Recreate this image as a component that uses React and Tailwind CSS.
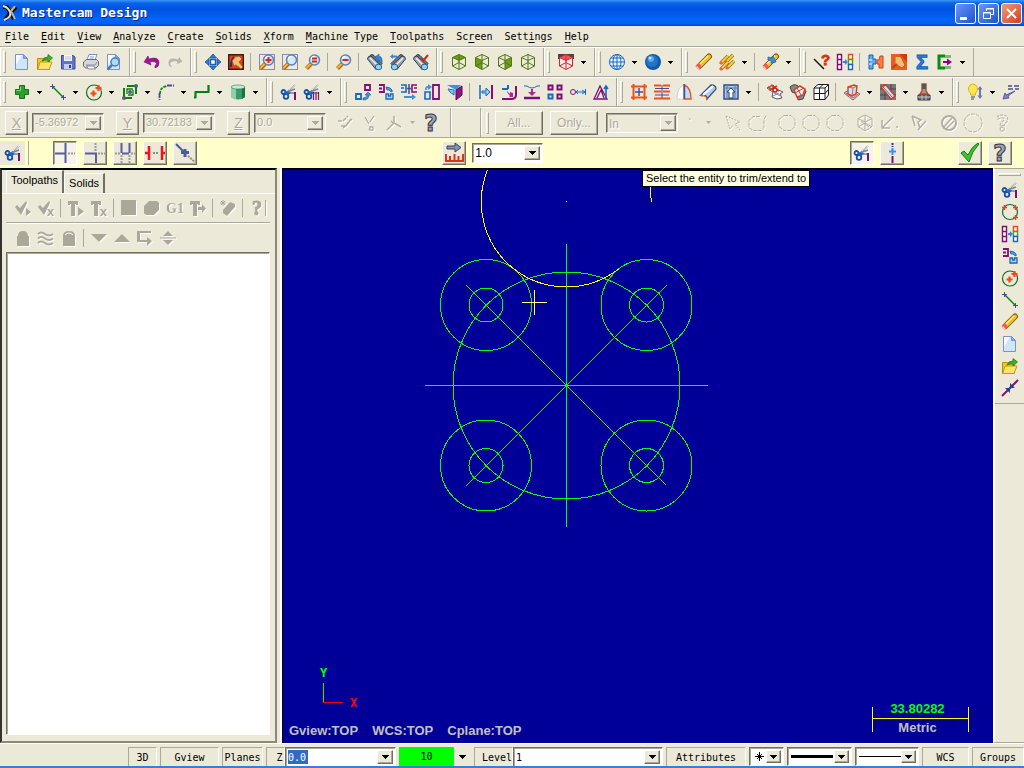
import React, { useState } from "react";

const MONO = "font-['DejaVu_Sans_Mono','Liberation_Mono',monospace]";
const SANS = "font-['Liberation_Sans',Arial,sans-serif]";

const raised =
  "border border-t-white border-l-white border-r-[#716f64] border-b-[#716f64] shadow-[inset_-1px_-1px_0_#aca899]";
const sunken =
  "border border-t-[#716f64] border-l-[#716f64] border-r-white border-b-white shadow-[inset_1px_1px_0_#aca899]";

/* ---------- shared icon parts ---------- */

const Page = () => (
  <>
    <path d="M1.500 .5h8l4 4v11h-12z" fill="#cfe5fc" stroke="#7c92c4" />
    <path d="M2 1h6L2 11z" fill="#f4faff" />
    <path d="M9.500 .5v4h4z" fill="#7fb0ea" stroke="#7c92c4" />
  </>
);

const Lens = () => (
  <>
    <path d="M1.500 14.500L6 10" stroke="#a86a10" strokeWidth="4" />
    <path d="M1.500 14L6 9.500" stroke="#ffb52c" strokeWidth="2" />
    <circle cx="9.500" cy="6" r="5" fill="#cfe9fd" stroke="#5f7fb5" strokeWidth="1.500" />
    <path d="M6.500 5a3 3 0 013-2.500" stroke="#fff" strokeWidth="1.500" />
  </>
);

const DotBox = () => (
  <rect x=".5" y=".5" width="15" height="15" stroke="#2a2a90" strokeDasharray="1 1" />
);

const Binocular = () => (
  <>
    <path d="M3 1.500q2-2 4 0l8 8-4 5z" fill="#6c7688" stroke="#343c4c" />
    <path d="M.5 5q0-3 3.500-3l9.500 9-4.500 4.500z" fill="#98a4b6" stroke="#343c4c" />
    <path d="M3 4l8 8" stroke="#eef2f8" strokeWidth="1.500" />
    <ellipse cx="11.500" cy="13" rx="3.200" ry="2.800" fill="#8fd3f6" stroke="#2c5f84" />
  </>
);

const Scissors = () => (
  <>
    <path d="M5 9l9-8M6 8l8-3M7 9h7" stroke="#7b8594" strokeWidth="1.500" />
    <path d="M8 6l6-5" stroke="#dfe5ee" />
    <circle cx="2.500" cy="8" r="2" stroke="#1550a8" strokeWidth="1.800" />
    <circle cx="5" cy="12.500" r="2.300" stroke="#1550a8" strokeWidth="1.800" />
    <path d="M4 8l4 1-2 2" stroke="#1d62c8" strokeWidth="2" />
  </>
);

const Cube = ({ face, fill = "#6f9c12", stroke = "#4f7812" }) => (
  <>
    {face && <path d={face} fill={fill} />}
    <path d="M8 .5l6.500 3v8.500L8 15.500 1.500 12V3.500zM1.500 3.500L8 6.500l6.500-3M8 6.500v9M8 .5v7M1.500 12L8 8.500l6.500 3.500" stroke={stroke} />
  </>
);

const Pencil = () => (
  <>
    <path d="M3.500 12L13 2.500" stroke="#7c5a08" strokeWidth="6" strokeLinecap="round" />
    <path d="M4 11.500l9-9" stroke="#f0c02c" strokeWidth="4" strokeLinecap="round" />
    <path d="M4 10l8-8" stroke="#ffe97c" strokeWidth="1.500" />
    <path d="M1 14l3.500-3" stroke="#f05a50" strokeWidth="5" />
    <path d="M.5 12.500l2.500 3" stroke="#ffc2bc" strokeWidth="1.500" />
  </>
);

const SlimPencil = ({ x, y }) => (
  <g transform={`translate(${x} ${y})`}>
    <path d="M1 9l7-7" stroke="#9a7208" strokeWidth="3.500" />
    <path d="M1 9l7-7" stroke="#f7cf3c" strokeWidth="2" />
    <path d="M0 10l2-2" stroke="#ee6058" strokeWidth="3" />
  </g>
);

const Columns = () => (
  <>
    <path d="M.5 .5h4v15h-4zM.5 5.500h4M.5 10.500h4" fill="#fff" stroke="#7c0f74" strokeWidth="1.400" />
    <path d="M6 7h2V5l3 3-3 3V9H6z" fill="#2d86dc" />
    <path d="M11.500 .5h4v5h-4z" fill="#fff" stroke="#ec4a17" strokeWidth="1.400" />
    <path d="M11.500 5.500h4v5h-4z" fill="#fff" stroke="#579a12" strokeWidth="1.400" />
    <path d="M11.500 10.500h4v5h-4z" fill="#fff" stroke="#1668c6" strokeWidth="1.400" />
  </>
);

const Rotate = () => (
  <>
    <path d="M1 1h5v7H1M1 4.500h3" stroke="#8a0a76" strokeWidth="1.800" />
    <path d="M8 3l4 1q3 2 2 4l-2-1q0-2-3-1z" fill="#55aaf0" stroke="#1a65b8" />
    <path d="M8 10h2.500v2h2v-2H15v5H8z" fill="#a8d8fa" stroke="#1a65b8" strokeWidth="1.300" />
  </>
);

const ghost = "#b2ae9f";

/* ---------- icons ---------- */

const icons = {
  new: <Page />,
  open: (
    <>
      <path d="M.5 4.500h5l1 1h6v10H.5z" fill="#f6c51e" stroke="#b98c0a" />
      <path d="M3 8h12l-3 7.500H.8z" fill="#ffe566" stroke="#c69a10" />
      <path d="M5 7q1-4 6-4V.5L15.500 4 11 8V6Q8 5.500 5 7z" fill="#47ab2c" stroke="#23781a" strokeWidth=".8" />
    </>
  ),
  save: (
    <>
      <path d="M1.500 1.500H13l2 1.500v12H1.500z" fill="#6373c8" stroke="#3c4a96" />
      <path d="M4 1h8v6H4z" fill="#f4f6fc" />
      <path d="M5 3h6M5 5h6" stroke="#b6bfda" />
      <path d="M4 10h8v5H4z" fill="#c5cdec" />
      <path d="M9 11h2v3H9z" fill="#343f86" />
    </>
  ),
  print: (
    <>
      <path d="M4 6l2-5.500h8L12 6z" fill="#fff" stroke="#7c92c4" />
      <path d="M7 3h4M6.500 5h4" stroke="#6aa5e8" />
      <path d="M.5 8l3-2.500h10l2 2v4L13 14H2.500l-2-2z" fill="#d4d6dc" stroke="#666a76" />
      <path d="M3 11h9l2-3" stroke="#8b8f9a" />
      <path d="M3.500 12h7l2 3h-7z" fill="#f4f6fa" stroke="#888c98" />
    </>
  ),
  preview: (
    <>
      <Page />
      <circle cx="9" cy="8" r="4" fill="#a8dcfa" stroke="#4a7cb4" strokeWidth="1.400" />
      <path d="M1.500 15.500L6 11" stroke="#4a7cb4" strokeWidth="2.500" />
    </>
  ),
  undo: <path d="M0 8l4-6 1 3q10-3 10 4 0 4-4 5v-2q3-3 0-4-3-1-5 0l1 3z" fill="#a3129a" stroke="#7a0c76" strokeWidth=".6" />,
  redo: <path d="M16 8l-4-6-1 3Q1 2 1 9q0 4 4 5v-2Q2 9 5 8q3-1 5 0l-1 3z" fill="#b9b6a8" stroke="#fff" strokeWidth=".5" />,
  fit: (
    <>
      <path d="M8 0l3.500 4h-7zM8 16l3.500-4h-7zM0 8l4-3.500v7zM16 8l-4-3.500v7z" fill="#2a7fd4" stroke="#0d4f9c" strokeWidth=".8" />
      <path d="M5.500 5.500h5v5h-5z" fill="#fff" stroke="#1660b4" strokeWidth="1.500" />
    </>
  ),
  repaint: (
    <>
      <path d="M.7 .7h14.600v14.600H.7z" fill="#e0401c" stroke="#4a1410" strokeWidth="1.400" />
      <path d="M3 13q0-7 3-10" stroke="#2c2c6c" strokeWidth="2" />
      <path d="M4 7l3-4 4-1 3 3-3 3 4 5-2 2-5-4-2 1z" fill="#f5bc74" stroke="#a85a20" />
    </>
  ),
  zoomWindow: (
    <>
      <DotBox />
      <Lens />
      <path d="M9.500 3v6M6.500 6h6" stroke="#e02414" strokeWidth="2" />
    </>
  ),
  zoomTarget: (
    <>
      <DotBox />
      <Lens />
    </>
  ),
  zoomEqual: (
    <>
      <Lens />
      <path d="M7 4.500h5M7 7.500h5" stroke="#e02414" strokeWidth="2" />
    </>
  ),
  zoomOut: (
    <>
      <Lens />
      <path d="M6.500 6h6" stroke="#e02414" strokeWidth="2" />
    </>
  ),
  viewRotate: (
    <>
      <Binocular />
      <path d="M8 3l4-3v2q4 1 3 7-1-3-3-3v2z" fill="#2d86dc" stroke="#1a5ca8" strokeWidth=".5" />
    </>
  ),
  viewPrev: (
    <>
      <g transform="translate(16 0) scale(-1 1)">
        <Binocular />
      </g>
      <path d="M0 2.500L3 0v1.500h4v2H3V5z" fill="#2d86dc" />
    </>
  ),
  viewSet: (
    <>
      <Binocular />
      <path d="M8 4l2 3 5-6" stroke="#c82c14" strokeWidth="2" />
    </>
  ),
  cubeTop: <Cube face="M8 .5l6.500 3L8 6.500 1.500 3.500z" />,
  cubeFront: <Cube face="M1.500 3.500L8 6.500v9L1.500 12z" />,
  cubeRight: <Cube face="M14.500 3.500L8 6.500v9l6.500-3.500z" />,
  cubeIso: <Cube />,
  cubeRed: (
    <>
      <path d="M0 0h16v5H0z" fill="#4a4648" />
      <path d="M1.500 4L8 1l6.500 3v8.500L8 15.500l-6.500-3z" fill="#ffe9e6" />
      <Cube face="M8 .5l6.500 3L8 6.500 1.500 3.500z" fill="#f05a62" stroke="#d0282c" />
    </>
  ),
  globe: (
    <>
      <circle cx="8" cy="8" r="7.500" fill="#e9f5ff" stroke="#1668c6" />
      <path d="M8 .5v15M.5 8h15M2 4h12M2 12h12" stroke="#1668c6" />
      <ellipse cx="8" cy="8" rx="4" ry="7.500" stroke="#1668c6" />
    </>
  ),
  sphere: (
    <>
      <circle cx="8" cy="8" r="8" fill="#1259a6" />
      <circle cx="7" cy="7" r="6" fill="#2274ca" />
      <circle cx="6" cy="5" r="3" fill="#5fa8ec" />
      <circle cx="5" cy="4" r="1.300" fill="#c9e6ff" />
    </>
  ),
  pencil: <Pencil />,
  pencils: (
    <>
      <SlimPencil x={1} y={0} />
      <SlimPencil x={6} y={-1} />
      <SlimPencil x={1} y={6} />
      <SlimPencil x={7} y={5} />
    </>
  ),
  unDelete: (
    <>
      <Pencil />
      <path d="M5 3l4 1 1-2 3 6-5 1 1-2-4-1z" fill="#3a92e4" stroke="#17599e" strokeWidth=".7" />
    </>
  ),
  analyze: (
    <>
      <path d="M0 5l10 10" stroke="#111" strokeWidth="1.400" />
      <text x="7" y="11" fontSize="15" fontWeight="bold" fill="#e02c14" stroke="#e02c14" strokeWidth=".8" fontFamily="Liberation Sans">?</text>
    </>
  ),
  columns: <Columns />,
  puzzle: (
    <>
      <path d="M1 1h4v4h3v5H5v5H1z" fill="#58aef0" stroke="#1660b0" />
      <path d="M1 6h3M1 10h3" stroke="#fff" />
      <path d="M15 2v12h-4v-4H9V6h2l1-4z" fill="#ff7c40" stroke="#cc4410" />
    </>
  ),
  orange: (
    <>
      <path d="M0 0h16v16H0z" fill="#f05a1c" />
      <path d="M8 0h8v8z" fill="#e03410" />
      <path d="M4 2l6 1 4 8-3 3-7-4z" fill="#f5bc74" stroke="#b8621c" />
      <path d="M1 14l5-4" stroke="#a84c14" strokeWidth="2" />
    </>
  ),
  sigma: (
    <text x="8" y="15" textAnchor="middle" fontSize="20" fontWeight="bold" fill="#2a86dc" stroke="#1460b8" fontFamily="Liberation Sans">Σ</text>
  ),
  brackets: (
    <>
      <path d="M8 2H2v12h6" stroke="#0b8a18" strokeWidth="3" />
      <path d="M9 1v3M11 1v3M13 1v3M9 12v3M11 12v3M13 12v3" stroke="#0b8a18" />
      <path d="M6 7h4V4.500L15 8l-5 3.500V9H6z" fill="#7c0f74" />
    </>
  ),
  plus: (
    <>
      <path d="M5.500 1.500h5v4h4v5h-4v4h-5v-4h-4v-5h4z" fill="#2ba02b" stroke="#17701a" />
      <path d="M6.500 2.500v4h-4" stroke="#83dc7c" />
    </>
  ),
  line: (
    <>
      <path d="M3 3l10 10" stroke="#0a8a14" strokeWidth="1.500" />
      <path d="M2.500 0v5M0 2.500h5M13.500 11v5M11 13.500h5" stroke="#4b4b92" />
    </>
  ),
  arc: (
    <>
      <circle cx="8" cy="8.500" r="7.500" stroke="#0d6e28" strokeWidth="1.200" />
      <path d="M7.500 6.500v6M4.500 9.500h6M12.500 1v6M9.500 4h6" stroke="#f04a14" strokeWidth="2.200" />
    </>
  ),
  rect: (
    <>
      <path d="M5 2h9v8M10 14H2V4" stroke="#0b7c18" strokeWidth="2" />
      <path d="M5 10V5h6M11 6v5H6" stroke="#0b7c18" strokeWidth="1.300" />
      <circle cx="8" cy="8" r="2" fill="#5a5a78" />
      <circle cx="2" cy="14" r="2" fill="#5a5a78" />
      <circle cx="14" cy="2" r="2" fill="#5a5a78" />
    </>
  ),
  fillet: (
    <>
      <path d="M2 10q0-7 7-8" stroke="#0a8a14" strokeWidth="1.800" strokeDasharray="3 1" />
      <path d="M9 1.500h7M1.500 9v7" stroke="#4b4b92" strokeWidth="1.800" strokeDasharray="5 1" />
    </>
  ),
  spline: <path d="M0 13.500h1.500V8h13V1" stroke="#0a7c14" strokeWidth="2.200" strokeLinejoin="round" />,
  cylinder: (
    <>
      <path d="M1 3h14v10q-7 5-14 0z" fill="#3b9a68" />
      <path d="M1 3h5v12q-3 0-5-2z" fill="#8fd0ac" />
      <path d="M12 3h3v10l-3 2z" fill="#1c6e44" />
      <ellipse cx="8" cy="3" rx="7" ry="2" fill="#c4ecd4" stroke="#2c7c50" strokeWidth=".6" />
    </>
  ),
  trim: (
    <>
      <Scissors />
      <path d="M14 8v8" stroke="#7c0f74" strokeWidth="2" />
    </>
  ),
  trimMany: (
    <>
      <Scissors />
      <path d="M9.500 8v8M12 8v8M14.500 8v8" stroke="#7c0f74" strokeWidth="1.200" />
    </>
  ),
  translate: (
    <>
      <path d="M10 1h5v5h-5z" stroke="#8a0a76" strokeWidth="1.800" />
      <path d="M1 10h5v5H1z" stroke="#1668c6" strokeWidth="1.800" />
      <path d="M8 14q4 0 4-3h-2l3-3 3 3h-2q0 5-6 5z" fill="#3a92e4" stroke="#17599e" strokeWidth=".6" />
    </>
  ),
  rotate: <Rotate />,
  mirror: (
    <>
      <path d="M0 1h5v7H0M0 4h3" stroke="#1668c6" strokeWidth="1.600" />
      <path d="M16 1h-5v7h5M16 4h-3" stroke="#8a0a76" strokeWidth="1.600" />
      <path d="M8 0v10M6 4.500h4" stroke="#4b4b92" strokeWidth="1.500" />
      <path d="M3 12h8v-2l4 3-4 3v-2H3z" fill="#3a92e4" />
    </>
  ),
  scale: (
    <>
      <path d="M9 1h6v14H9z" stroke="#8a0a76" strokeWidth="1.800" />
      <path d="M1 8h5v7H1z" stroke="#1668c6" strokeWidth="1.600" />
      <path d="M1 6q0-4 3-4V0l4 3-4 3V4Q2 4 3 6z" fill="#3a92e4" />
    </>
  ),
  project: (
    <>
      <path d="M0 1h14L9 6z" fill="#3a92e4" />
      <path d="M1 5l6 1v5L3 8z" fill="#8fcdf8" stroke="#1668c6" />
      <path d="M9 6l6-4v9l-6 5z" fill="#8a1a80" stroke="#5c0a56" />
    </>
  ),
  offset: (
    <>
      <path d="M2 1v14" stroke="#1668c6" strokeWidth="1.500" />
      <path d="M14 1v14" stroke="#8a0a76" strokeWidth="2" />
      <path d="M4 7h4V4l4 4-4 4V9H4z" fill="#8fcdf8" stroke="#1668c6" />
    </>
  ),
  offsetContour: (
    <>
      <path d="M1 5h6M7 1v4" stroke="#1668c6" strokeWidth="2" />
      <path d="M15 2v9q0 4-5 4H1" stroke="#8a0a76" strokeWidth="2" />
      <path d="M6 7l3 3V8l3 1v4H8l1-1-3-4z" fill="#b0268e" />
    </>
  ),
  projectDown: (
    <>
      <path d="M0 2h3q5 4 10 0h3" stroke="#1668c6" />
      <path d="M0 14h16" stroke="#7c0f74" strokeWidth="2.500" />
      <path d="M7 5h2v3h3l-4 4-4-4h3z" fill="#b0268e" />
    </>
  ),
  array: (
    <>
      <path d="M1.500 1.500h4v4h-4zM10.500 1.500h4v4h-4zM10.500 10.500h4v4h-4z" stroke="#7c0f74" strokeWidth="2" />
      <path d="M1.500 10.500h4v4h-4z" stroke="#1668c6" strokeWidth="2" />
    </>
  ),
  stretch: (
    <>
      <circle cx="3" cy="8" r="2.500" stroke="#7c0f74" />
      <path d="M6 8h9M8 6l-2 2 2 2M12 6l3 2-3 2M15.500 5v6" stroke="#1668c6" />
    </>
  ),
  warp: (
    <>
      <path d="M7 2L1 15h13zM4 14l4-8 3 8" stroke="#7c0f74" strokeWidth="1.300" />
      <path d="M13 14V3M11 5l2-3 2 3" stroke="#1668c6" strokeWidth="1.600" />
    </>
  ),
  fence: (
    <>
      <path d="M2.500 0v16M13.500 0v16M0 2.500h16M0 13.500h16" stroke="#f0501c" strokeWidth="2" />
      <path d="M8 4v8M4 8h8" stroke="#4b4b92" strokeWidth="1.500" />
    </>
  ),
  ruled: (
    <>
      <path d="M0 1.500h7M9 1.500h7M0 7.500h7M9 7.500h7M0 14.500h16" stroke="#f0501c" strokeWidth="2" />
      <path d="M1 4.500h14M1 11h14M8 1v13" stroke="#4b4b92" />
    </>
  ),
  revolve: (
    <>
      <path d="M0 15q0-12 7-14v14z" fill="#fff" stroke="#c8d4e4" />
      <path d="M7 1q7 2 7 14H7z" fill="#b4e2fb" stroke="#f0501c" strokeWidth="1.400" />
      <path d="M7.500 0v15" stroke="#4b4b92" strokeWidth="1.400" />
    </>
  ),
  sweep: (
    <>
      <path d="M1 11L11 1q5 0 5 4L7 15q0-5-6-4z" fill="#b4cef0" stroke="#3c5488" strokeWidth="1.300" />
      <path d="M3 11L13 2" stroke="#fff" strokeWidth="2" />
      <path d="M1 12q6-1 6 4" stroke="#e05a20" />
    </>
  ),
  drafted: (
    <>
      <path d="M1 1h14v14H1z" fill="#a9c8ea" stroke="#30487c" strokeWidth="1.400" />
      <path d="M1 4h14M4 1v14M12 1v14" stroke="#5a7cb0" />
      <path d="M8 4l4 4h-2v6H6V8H4z" fill="#fff" stroke="#2c3c6c" />
    </>
  ),
  net: (
    <>
      <path d="M0 4l6-3 3 4 7 3-3 2 2 4-5 1-5-2 1-5z" fill="#fff" stroke="#55586c" />
      <path d="M1 3l9 5M4 1l8 6M2 6l8-4" stroke="#e03a1c" strokeWidth="1.600" />
      <path d="M7 9l7 3M6 12l6-3" stroke="#7c8090" />
      <circle cx="8" cy="6" r="2" fill="#fff" stroke="#c01c1c" strokeWidth="1.300" />
    </>
  ),
  netFill: (
    <>
      <path d="M0 3q4-4 8-1l2 2 6 3-3 8-5 1-1-6-5-2z" fill="#85888f" stroke="#44464e" />
      <path d="M4 6l6-4 5 3-2 6-6 2z" fill="#e4eff8" stroke="#e03a1c" strokeWidth="1.500" />
      <path d="M5 9l9-5M7 4l4 7" stroke="#e03a1c" />
    </>
  ),
  wireCube: <path d="M1 4l4-3.500h10.500V11L12 15.500H1zM1 4h11v11.500M12 4l3.500-3.500M6.500 4v11.500M1 9.500h11l3.500-4M6.500 4L10 .5" fill="#fff" stroke="#1a1a24" />,
  trimSurf: (
    <>
      <path d="M0 9l5-3 6 1 5 3-7 6z" fill="#d2d8e0" stroke="#666c7a" />
      <path d="M4 3l6-2 3 1-1 8-4 2-4-2z" fill="#bfe6fb" stroke="#e03a1c" strokeWidth="1.400" />
      <path d="M4 3l5 1 4-2M9 4l-1 8M2 9l7 5 5-4" stroke="#e03a1c" strokeWidth=".8" />
    </>
  ),
  fillSurf: (
    <>
      <path d="M0 0h16v16H0z" fill="#76787e" />
      <path d="M0 5h16M0 11h16M5 0v16M11 0v16" stroke="#44464c" />
      <path d="M1 3l5-2 9 11-4 3z" fill="#bfe6fb" stroke="#e03a1c" strokeWidth="1.400" />
      <path d="M3 3l9 10" stroke="#5c7cb0" />
    </>
  ),
  blend: (
    <>
      <path d="M6 0h4v7l2 3H4l2-3z" fill="#9a9ca4" stroke="#e03a1c" strokeWidth="1.400" />
      <path d="M6 0h4v5H6z" fill="#55575f" />
      <path d="M2 11h12v5H2z" fill="#6a6c74" stroke="#33353c" />
      <path d="M2 13h12M6 11v5M10 11v5" stroke="#c0c2c8" />
    </>
  ),
  bulb: (
    <>
      <path d="M5.500 0a5 5 0 013 9v2h-5V9a5 5 0 012-9z" fill="#ffe64c" stroke="#cfa818" strokeWidth=".8" />
      <path d="M4 13h4M4 15h3" stroke="#7c7c84" strokeWidth="1.500" />
      <path d="M13 2l2.500 3.500H14v6h1.500L13 15l-2.500-3.500H12v-6h-1.500z" fill="#6c78b4" />
    </>
  ),
  level: (
    <>
      <path d="M5 2h4M11 2h5M5 5h5M12 5h4" stroke="#4b4b92" strokeWidth="1.400" />
      <path d="M12 7l-7 5 1 2-6 1 2-6 1 2z" fill="#7c86c0" stroke="#4b4b92" strokeWidth=".8" />
    </>
  ),
  circle3: (
    <>
      <circle cx="8" cy="8" r="7.500" stroke="#0d6e48" strokeWidth="1.200" />
      <path d="M2.500 1v5M0 3.500h5M13.500 1v5M11 3.500h5M13.500 11v5M11 13.500h5" stroke="#f0401c" strokeWidth="1.400" />
    </>
  ),
  breakTwo: (
    <>
      <path d="M0 16L16 0" stroke="#8a0a76" strokeWidth="2" />
      <path d="M3 8h5v5zM8 3v5h5z" fill="#17419c" />
    </>
  ),
  trim1: (
    <>
      <path d="M10.500 0v20M0 10.500h10" stroke="#5c5c9c" strokeWidth="2" />
      <path d="M13 10.500h7" stroke="#9c9c90" strokeWidth="2" strokeDasharray="2 1" />
    </>
  ),
  trim2: (
    <>
      <path d="M0 10.500h11V20" stroke="#5c5c9c" strokeWidth="2" />
      <path d="M10.500 0v9M13 10.500h7" stroke="#9c9c90" strokeWidth="2" strokeDasharray="2 1" />
    </>
  ),
  trim3: (
    <>
      <path d="M6.500 0v10M14.500 0v10M7 10.500h7" stroke="#5c5c9c" strokeWidth="2" />
      <path d="M0 10.500h6M16 10.500h4M6.500 12v8M14.500 12v8" stroke="#9c9c90" strokeWidth="2" strokeDasharray="2 1" />
    </>
  ),
  divide: (
    <>
      <path d="M4 3v14M17 3v14M0 10h5M16 10h4" stroke="#f01414" strokeWidth="2.500" />
      <path d="M8 10h6" stroke="#8c8c84" strokeWidth="2" strokeDasharray="2 1" />
    </>
  ),
  toPoint: (
    <>
      <path d="M1 1l8 8" stroke="#4b5c94" strokeWidth="2" />
      <path d="M10 6v8M6 9.500h8" stroke="#4b5c94" strokeWidth="3" />
      <path d="M13 13l7 6" stroke="#8c8c84" strokeWidth="2" strokeDasharray="2 1" />
    </>
  ),
  length: (
    <>
      <path d="M3 3h8V0l6 4.500L11 9V6H3z" fill="#8494ac" stroke="#3c4450" />
      <path d="M2 11v7h17v-7M6 13v5M10.500 11v7M14.500 13v5" stroke="#e03410" strokeWidth="2" />
    </>
  ),
  breakMode: (
    <>
      <path d="M10.500 0v4" stroke="#17419c" strokeWidth="2" strokeDasharray="2 1" />
      <path d="M10.500 5v7M7 8.500h7" stroke="#3a92e4" strokeWidth="2" />
      <path d="M10.500 13v7" stroke="#7c0f74" strokeWidth="2" />
    </>
  ),
  ok: <path d="M1 10l3-2 4 4Q12 3 18 0l1 1Q12 8 9 19z" fill="#3fc42e" stroke="#177a12" />,
  help: (
    <text x="8" y="16" textAnchor="middle" fontSize="23" fontWeight="bold" fill="#9ea3b6" stroke="#30323c" fontFamily="DejaVu Sans">?</text>
  ),
};

// greyed-out icons
const dim = {
  check: (
    <>
      <path d="M0 7l2-2 3 3 6-7 1 2-6 12z" />
      <path d="M11 8l5 4-5 4z" />
    </>
  ),
  checkX: (
    <>
      <path d="M0 7l2-2 3 3 6-7 1 2-6 12z" />
      <path d="M9 9h2l1.500 2L14 9h2l-2.500 3.500L16 16h-2l-1.500-2L11 16H9l2.500-3.500z" />
    </>
  ),
  tRun: (
    <>
      <path d="M0 1h10v4H8V4H7v12H3V4H2v1H0z" />
      <path d="M10 7l6 4.500-6 4.500z" />
    </>
  ),
  tX: (
    <>
      <path d="M0 1h10v4H8V4H7v12H3V4H2v1H0z" />
      <path d="M9 9h2l1.500 2L14 9h2l-2.500 3.500L16 16h-2l-1.500-2L11 16H9l2.500-3.500z" />
    </>
  ),
  square: <path d="M0 0h15v15H0z" />,
  solid: <path d="M5 1h8l2 2v7l-5 5H2l-2-2V6z" />,
  g1: (
    <text x="8" y="13" textAnchor="middle" fontSize="14" fontWeight="bold" fontFamily="Liberation Serif">
      G1
    </text>
  ),
  tNext: (
    <>
      <path d="M0 1h10v4H8V4H7v12H3V4H2v1H0z" />
      <path d="M8 7h4V4l4 4.500-4 4.500v-3H8z" />
    </>
  ),
  feed: (
    <>
      <path d="M3 10l7-8 5 2v3l-8 9-4-3z" />
      <path d="M3 0v6M0 3h6M1 1l4 4M5 1L1 5" stroke="#aca899" />
    </>
  ),
  question: (
    <>
      <text x="7" y="15" textAnchor="middle" fontSize="20" fontWeight="bold" stroke="#aca899" fontFamily="Liberation Serif">
        ?
      </text>
      <path d="M15 0h1v16h-1z" />
    </>
  ),
  lock: <path d="M3 6q0-5 5-5t5 5h1v10H2V6z" />,
  waves: <path d="M0 4q3-3 7 0t8 0M0 8.500q3-3 7 0t8 0M0 13q3-3 7 0t8 0" fill="none" stroke="#aca899" strokeWidth="2" />,
  ghostLock: (
    <>
      <path d="M2 6q0-5 6-5t6 5v10H2z" />
      <path d="M4 5q4-4 8 0" fill="none" stroke="#fff" />
    </>
  ),
  down: <path d="M0 4h16l-8 8z" />,
  up: <path d="M0 12h16L8 4z" />,
  into: <path d="M0 1h14v2H3v7h7V7l5 4-5 5v-4H0z" />,
  scroll: <path d="M3 6l5-5 5 5zM3 10l5 5 5-5zM0 7.500h16v1H0z" />,
};

// empty outlines used while no selection is active
const faint = {
  dot: <path d="M7 4h2" stroke={ghost} />,
  fast: <path d="M0 6h5l5-5M3 11h5l5-7M9 9l5-5M5 13l4-3" stroke={ghost} strokeWidth="1.500" strokeDasharray="4 1" />,
  mid: <path d="M3 2l4 7M12 1L8 7M8 11v2q-2 2 1 2h2v-3H8" stroke={ghost} strokeWidth="1.300" />,
  along: <path d="M8 1v7L1 15M8 8l7 4M5 6l3 3" stroke={ghost} strokeWidth="1.500" />,
  lasso: <path d="M1 1l14 6-5 2 5 6M1 1l4 13 3-4" stroke={ghost} strokeDasharray="2 1" />,
  poly: <path d="M11 1.500H4l-4 4v7l4 3h8l3-3v-8l2-4" stroke={ghost} strokeDasharray="4 1" />,
  hex: <path d="M5 .5h7l4 4v7l-4 4H5l-5-4v-7z" stroke={ghost} strokeDasharray="4 1" />,
  cube: <path d="M8 0l7 3.500v8L8 16l-7-4.500v-8zM1 3.500L8 7l7-3.500M8 1v14M1 12l7-4 7 4M4 6l8 6" stroke={ghost} />,
  pick: <path d="M12 2L2 12M1 5v8h8M15 12h2" stroke={ghost} strokeWidth="1.500" />,
  cursor: <path d="M1 1l9 4-3 2 2 6M1 1l3 10M15 6l-8 9" stroke={ghost} strokeWidth="1.500" />,
  no: (
    <>
      <circle cx="8" cy="8" r="7" stroke={ghost} strokeWidth="2" />
      <path d="M3 12L11 3M5 14l8-8" stroke={ghost} strokeWidth="1.500" />
    </>
  ),
  ring: <circle cx="8" cy="8" r="9" stroke={ghost} strokeDasharray="4 1" />,
  quest: (
    <text x="8" y="16" textAnchor="middle" fontSize="22" fontWeight="bold" stroke={ghost} strokeDasharray="3 1" fontFamily="DejaVu Sans">
      ?
    </text>
  ),
};

/* ---------- toolbar pieces ---------- */

function Icon({ name }) {
  return (
    <svg className="h-4 w-4 overflow-visible" viewBox="0 0 16 16" fill="none">
      {icons[name]}
    </svg>
  );
}

function Tri({ className = "fill-black" }) {
  return (
    <svg className={className} width="7" height="4" viewBox="0 0 7 4" shapeRendering="crispEdges">
      <path d="M0 0h7L3.500 4z" />
    </svg>
  );
}

function Tool({ name }) {
  if (name === "|") return <div className="mr-1 ml-[3px] h-[18px] w-px bg-[#aca899]" />;
  if (name === "v") {
    return (
      <button aria-label="more" className="flex h-6 w-[13px] items-center justify-center">
        <svg width="5" height="3" viewBox="0 0 5 3" shapeRendering="crispEdges">
          <path d="M0 0h5L2.500 3z" />
        </svg>
      </button>
    );
  }
  return (
    <button aria-label={name} className="flex h-6 w-[23px] items-center justify-center">
      <Icon name={name} />
    </button>
  );
}

function Grip() {
  return <div className="h-[22px] w-[3px] border border-t-white border-l-white border-r-[#aca899] border-b-[#aca899]" />;
}

function Band({ tools }) {
  return (
    <div className="flex h-full shrink-0 items-center border-r border-l border-r-[#aca899] border-l-white pr-1 pl-[2px]">
      <div className="mr-1">
        <Grip />
      </div>
      {tools.split(" ").map((n, i) => (
        <Tool key={i} name={n} />
      ))}
    </div>
  );
}

function ToolRow({ children }) {
  return (
    <div className="flex h-[30px] items-center overflow-hidden border-t border-b border-t-white border-b-[#aca899]">
      {children}
    </div>
  );
}

function Combo({ label, value, disabled, className, size = "text-xs", selected }) {
  const [text, setText] = useState(value);
  return (
    <div className={`flex h-5 items-stretch p-[2px] ${sunken} ${disabled ? "bg-[#ece9d8]" : "bg-white"} ${className}`}>
      <input
        aria-label={label}
        value={text}
        disabled={disabled}
        size={1}
        onChange={(e) => setText(e.target.value)}
        className={`min-w-0 outline-none ${size} ${
          selected ? "w-[20px] flex-none bg-[#316ac5] text-white" : "flex-1"
        } ${disabled ? "text-[#aca899] [text-shadow:1px_1px_0_white]" : ""}`}
      />
      {selected && <div className="flex-1" />}
      <button
        aria-label={`${label} list`}
        disabled={disabled}
        className={`flex w-4 items-center justify-center bg-[#ece9d8] ${raised}`}
      >
        <Tri className={disabled ? "fill-[#aca899]" : "fill-black"} />
      </button>
    </div>
  );
}

function RibbonButton({ name, pressed }) {
  return (
    <button
      aria-label={name}
      className={`flex h-6 w-6 items-center justify-center ${
        pressed ? `bg-[#f5f3ea] ${sunken}` : `bg-[#ece9d8] ${raised}`
      }`}
    >
      {["trim", "help"].includes(name) ? (
        <Icon name={name} />
      ) : (
        <svg className="h-5 w-5 overflow-visible" viewBox="0 0 20 20" fill="none">
          {icons[name]}
        </svg>
      )}
    </button>
  );
}

function Faint({ name }) {
  if (name === "|") return <div className="w-[6px]" />;
  if (name === "v") {
    return (
      <button aria-label="more" disabled className="flex w-[13px] justify-center">
        <svg width="5" height="3" viewBox="0 0 5 3" fill={ghost}>
          <path d="M0 0h5L2.500 3z" />
        </svg>
      </button>
    );
  }
  return (
    <button aria-label={name} disabled className="flex w-6 justify-center">
      <svg className="h-4 w-4 overflow-visible drop-shadow-[1px_1px_0_white]" viewBox="0 0 16 16" fill="none">
        {faint[name]}
      </svg>
    </button>
  );
}

function DimTool({ name }) {
  if (name === "|") return <div className="mr-[3px] ml-[3px] h-[18px] w-px bg-[#aca899]" />;
  return (
    <button aria-label={name} disabled className="flex w-[23px] justify-center">
      <svg
        className="h-4 w-4 overflow-visible drop-shadow-[1px_1px_0_white]"
        viewBox="0 0 16 16"
        fill="#aca899"
      >
        {dim[name]}
      </svg>
    </button>
  );
}

/* ---------- window ---------- */

function TitleBar() {
  return (
    <div className="flex h-[26px] items-center bg-[linear-gradient(to_bottom,#3c96fa_0%,#0a62ea_12%,#0052e0_35%,#0464fa_75%,#0460f4_90%,#0646c4_100%)] pr-[2px] pl-[2px]">
      <svg className="h-4 w-4" viewBox="0 0 16 16" fill="none">
        <path d="M1 2h4l7 12M14 2L9 7l-6 8" stroke="#111" strokeWidth="4" />
        <path d="M1 1q5 1 7 6t-6 8" stroke="#e4e0d4" strokeWidth="2" />
        <path d="M13 1L9 6l4 8" stroke="#b8b4a8" strokeWidth="2" />
        <path d="M9 6l4-4" stroke="#e0b040" strokeWidth="1.500" />
      </svg>
      <h1 className={`ml-1 flex-1 text-[13px] leading-4 font-bold text-white [text-shadow:1px_1px_0_#0a2a80] ${MONO}`}>
        Mastercam Design
      </h1>
      <div className="flex gap-[2px]">
        <button aria-label="Minimize" className="h-[21px] w-[21px] rounded-[3px] border border-white bg-gradient-to-br from-[#6a96f4] to-[#1c4fd4]">
          <svg viewBox="0 0 19 19">
            <path d="M4 13h7v3H4z" fill="#fff" />
          </svg>
        </button>
        <button aria-label="Restore" className="h-[21px] w-[21px] rounded-[3px] border border-white bg-gradient-to-br from-[#6a96f4] to-[#1c4fd4]">
          <svg viewBox="0 0 19 19" fill="none" stroke="#fff">
            <path d="M7.500 7V4.500h7v6H12M7 5h8M4.500 8.500h7v6h-7zM4 9h8" />
          </svg>
        </button>
        <button aria-label="Close" className="h-[21px] w-[21px] rounded-[3px] border border-white bg-gradient-to-br from-[#f0987c] to-[#d03c14]">
          <svg viewBox="0 0 19 19" stroke="#fff" strokeWidth="2">
            <path d="M5 5l9 9M14 5l-9 9" />
          </svg>
        </button>
      </div>
    </div>
  );
}

// [text, index of the underlined letter]
const menus = [
  ["File", 0],
  ["Edit", 0],
  ["View", 0],
  ["Analyze", 0],
  ["Create", 0],
  ["Solids", 0],
  ["Xform", 0],
  ["Machine Type", 0],
  ["Toolpaths", 0],
  ["Screen", 2],
  ["Settings", 4],
  ["Help", 0],
];

function MenuBar() {
  return (
    <nav className={`flex h-[21px] items-center gap-3 border-b border-[#aca899] pl-[5px] text-[10px] ${MONO}`}>
      {menus.map(([text, u]) => (
        <button key={text} className="whitespace-nowrap">
          {text.slice(0, u)}
          <u className="underline-offset-2">{text[u]}</u>
          {text.slice(u + 1)}
        </button>
      ))}
    </nav>
  );
}

function AxisField({ axis, value }) {
  return (
    <div className="mr-3 flex items-center gap-1">
      <button disabled className={`h-6 w-[23px] text-sm text-[#aca899] underline [text-shadow:1px_1px_0_white] ${raised}`}>
        {axis}
      </button>
      <Combo label={axis} value={value} disabled size="text-[11px]" className="w-[72px]" />
    </div>
  );
}

function CoordinateRow() {
  return (
    <div className="flex h-[31px] items-center overflow-hidden border-t border-b border-t-white border-b-[#aca899]">
      <div className="flex h-full shrink-0 items-center border-r border-[#aca899] pr-2 pl-[5px]">
        <AxisField axis="X" value="-5.36972" />
        <AxisField axis="Y" value="30.72183" />
        <AxisField axis="Z" value="0.0" />
        <div className="-ml-1 flex items-center">
          {["fast", "mid", "along", "v"].map((n) => (
            <Faint key={n} name={n} />
          ))}
          <Tool name="help" />
        </div>
      </div>
      <div className="h-full w-[30px] shrink-0 border-r border-l border-r-[#aca899] border-l-white" />
      <div className="flex shrink-0 items-center border-l border-white pl-1">
        <Grip />
        <button disabled className={`ml-[6px] h-6 w-12 text-xs text-[#aca899] [text-shadow:1px_1px_0_white] ${raised}`}>
          All...
        </button>
        <button disabled className={`ml-[7px] h-6 w-12 text-xs text-[#aca899] [text-shadow:1px_1px_0_white] ${raised}`}>
          Only...
        </button>
        <div className={`relative ml-2 h-5 w-[72px] p-[2px] ${sunken}`}>
          <select
            aria-label="Selection mode"
            disabled
            className="block h-full w-full appearance-none bg-[#ece9d8] text-xs leading-4 text-[#aca899] opacity-100 [text-shadow:1px_1px_0_white]"
          >
            <option>In</option>
          </select>
          <div className={`pointer-events-none absolute top-[1px] right-[1px] flex h-4 w-4 items-center justify-center bg-[#ece9d8] ${raised}`}>
            <Tri className="fill-[#aca899]" />
          </div>
        </div>
        {"dot v | lasso poly | hex hex hex | cube pick | cursor | no ring | quest".split(" ").map((n, i) => (
          <Faint key={i} name={n} />
        ))}
      </div>
    </div>
  );
}

function Ribbon() {
  return (
    <div className="flex h-[30px] items-center bg-[#ffffcc] pr-3">
      <div className="flex h-6 w-[25px] items-center justify-center bg-[#ece9d8]">
        <Icon name="trim" />
      </div>
      <div className="mr-6 ml-[3px] h-6 w-px bg-[#aca899]" />
      <div className="flex gap-[6px]">
        <RibbonButton name="trim1" pressed />
        <RibbonButton name="trim2" />
        <RibbonButton name="trim3" />
        <RibbonButton name="divide" />
        <RibbonButton name="toPoint" />
      </div>
      <div className="grow-[4]" />
      <RibbonButton name="length" />
      <Combo label="Length" value="1.0" className="ml-[6px] w-[71px]" />
      <div className="grow-[5]" />
      <div className="flex gap-[6px]">
        <RibbonButton name="trim" pressed />
        <RibbonButton name="breakMode" />
      </div>
      <div className="ml-[54px] flex gap-[6px]">
        <RibbonButton name="ok" />
        <RibbonButton name="help" />
      </div>
    </div>
  );
}

function OperationsPanel() {
  const [tab, setTab] = useState("Toolpaths");
  return (
    <aside className="flex w-[277px] shrink-0 flex-col border-t-2 border-r-2 border-b-2 border-l-2 border-t-black border-r-[#8c897c] border-b-[#8c897c] border-l-[#33322c]">
      <div className="flex h-[23px] items-end pl-1 text-[11px]" role="tablist">
        {["Toolpaths", "Solids"].map((t) => (
          <button
            key={t}
            role="tab"
            aria-selected={tab === t}
            onClick={() => setTab(t)}
            className={`border-t border-r-2 border-l border-t-white border-r-[#716f64] border-l-white px-1 ${
              tab === t ? "h-[23px] pb-1" : "h-5"
            }`}
          >
            {t}
          </button>
        ))}
      </div>
      <div className="flex flex-1 flex-col border-t border-white pr-[5px] pl-1">
        <div className="flex h-[29px] items-center border-b border-[#aca899] pl-[5px]">
          {"check checkX | tRun tX | square solid g1 tNext | feed | question".split(" ").map((n, i) => (
            <DimTool key={i} name={n} />
          ))}
        </div>
        <div className="flex h-[29px] items-center border-t border-white pl-[5px]">
          {"lock waves ghostLock | down up into scroll".split(" ").map((n, i) => (
            <DimTool key={i} name={n} />
          ))}
        </div>
        <div className={`mb-[6px] flex-1 bg-white ${sunken}`} />
      </div>
    </aside>
  );
}

const holes = [
  [486, 305],
  [646.5, 305],
  [486, 465.5],
  [646.5, 465.5],
];

function Drawing() {
  return (
    <svg className="absolute inset-0 h-full w-full" fill="none" shapeRendering="crispEdges">
      <g transform="translate(-283 -170)" stroke="#00ff00">
        <path d="M566.500 244v283M425 385.500h283" />
        <path d="M466 285l200 200M667 285L466 486" />
        <circle cx="566.500" cy="385.500" r="113.500" />
        {holes.map(([x, y]) => (
          <g key={`${x}-${y}`}>
            <circle cx={x} cy={y} r="45.500" />
            <circle cx={x} cy={y} r="17" />
          </g>
        ))}
        <g stroke="#ffff00">
          <path d="M487.500 170A85 85 0 00618.500 269" />
          <path d="M650.500 186v8l1 8M566 201.500h1" />
        </g>
        <path d="M522 302.500h25M534.500 290v25" stroke="#ffff80" />
      </g>
    </svg>
  );
}

function Viewport() {
  return (
    <main className="relative flex min-w-0 flex-1 flex-col justify-end border-t-2 border-l border-black bg-[#000099]">
      <Drawing />
      <div role="tooltip" className="absolute top-0 left-[359px] h-[17px] border border-black bg-[#ffffe1] px-[3px] text-[11px] leading-[15px] whitespace-nowrap">
        Select the entity to trim/extend to
      </div>
      <div className="flex items-end justify-between pr-6 pb-1 pl-[6px] text-[13px] leading-4 font-bold text-[#c0c0c0]">
        <div>
          <svg className="mb-[10px] ml-7 block" width="48" height="48" shapeRendering="crispEdges">
            <path d="M6.500 18v20" stroke="#00ff00" />
            <path d="M6 37.500h20" stroke="#ff0000" />
            <text x="3" y="12" fontSize="12" fontFamily="DejaVu Sans Mono" fill="#00ff00">
              Y
            </text>
            <text x="33" y="42" fontSize="12" fontFamily="DejaVu Sans Mono" fill="#ff0000">
              X
            </text>
          </svg>
          <div className="flex gap-[14px]">
            <span>Gview:TOP</span>
            <span>WCS:TOP</span>
            <span>Cplane:TOP</span>
          </div>
        </div>
        <div className="mb-[3px] w-[97px] text-center">
          <div className="pr-[6px] text-[#00ff00]">33.80282</div>
          <svg className="-mt-[10px] -mb-[12px] block w-full" height="25" viewBox="0 0 97 25" fill="none" stroke="#ffff00" shapeRendering="crispEdges">
            <path d="M.5 0v25M96.500 0v25M0 11.500h97" />
          </svg>
          <div className="pr-[6px]">Metric</div>
        </div>
      </div>
    </main>
  );
}

function SideBar() {
  return (
    <div className="w-[31px] shrink-0 border-t border-b border-l-2 border-t-[#aca899] border-b-[#aca899] border-l-white">
      <div className="flex flex-col items-center border-b border-[#aca899] pt-1 pb-1">
        <div className="mb-[3px] h-[3px] w-[23px] border border-t-white border-l-white border-r-[#aca899] border-b-[#aca899]" />
        {"trim circle3 columns rotate arc line pencil new open breakTwo".split(" ").map((n) => (
          <button key={n} aria-label={n} className="flex h-[22px] w-[23px] items-center justify-center">
            <Icon name={n} />
          </button>
        ))}
      </div>
    </div>
  );
}

const cell =
  "flex shrink-0 items-center justify-center border border-t-[#aca899] border-l-[#aca899] border-r-white border-b-0 whitespace-nowrap";

function StyleList({ label, className, children }) {
  return (
    <button aria-label={label} className={`flex shrink-0 items-stretch bg-white p-[2px] ${sunken} ${className}`}>
      <span className="flex flex-1 items-center justify-center self-center">{children}</span>
      <span className={`flex w-[15px] items-center justify-center bg-[#ece9d8] ${raised}`}>
        <Tri />
      </span>
    </button>
  );
}

function StatusBar() {
  return (
    <footer className={`flex h-[25px] items-stretch gap-[3px] overflow-hidden border-t border-b-2 border-t-white border-b-[#3a7edc] pt-[3px] text-[10px] ${MONO}`}>
      <div className="min-w-0 flex-1" />
      <button className={`${cell} w-[29px]`}>3D</button>
      <button className={`${cell} w-[59px]`}>Gview</button>
      <button className={`${cell} w-[41px]`}>Planes</button>
      <div className="flex shrink-0">
        <span className={`${cell} w-[19px] pl-2`}>Z</span>
        <Combo label="Z depth" value="0.0" size="text-[10px]" selected className="w-[111px]" />
      </div>
      <div className="flex shrink-0">
        <select aria-label="Color" className="w-[55px] appearance-none bg-[#00ff00] text-center">
          <option>10</option>
        </select>
        <button aria-label="Color list" className="flex w-[17px] items-center justify-center">
          <Tri />
        </button>
      </div>
      <div className="flex shrink-0">
        <span className={`${cell} w-[39px] justify-end overflow-hidden`}>Level</span>
        <Combo label="Level" value="1" size="text-[10px]" className="w-[150px]" />
      </div>
      <button className={`${cell} w-[80px]`}>Attributes</button>
      <StyleList label="Point style" className="w-[35px]">
        <svg width="11" height="11" stroke="#000" fill="none">
          <path d="M5.500 1v9M1 5.500h9M3 3l5 5M8 3L3 8" />
        </svg>
      </StyleList>
      <StyleList label="Line width" className="w-[65px]">
        <svg width="42" height="3">
          <path d="M0 0h42v3H0z" />
        </svg>
      </StyleList>
      <StyleList label="Line style" className="w-[64px]">
        <svg width="42" height="1">
          <path d="M0 0h42v1H0z" />
        </svg>
      </StyleList>
      <button className={`${cell} w-[47px]`}>WCS</button>
      <button className={`${cell} w-[52px]`}>Groups</button>
    </footer>
  );
}

export default function App() {
  return (
    <div className={`flex h-screen flex-col bg-[#ece9d8] text-black ${SANS}`}>
      <TitleBar />
      <MenuBar />
      <ToolRow>
        <Band tools="new open save print preview" />
        <Band tools="undo redo" />
        <Band tools="fit repaint | zoomWindow zoomTarget zoomEqual | zoomOut | viewRotate viewPrev viewSet" />
        <Band tools="cubeTop cubeFront cubeRight cubeIso" />
        <Band tools="cubeRed v" />
        <Band tools="globe v sphere v" />
        <Band tools="pencil pencils v | unDelete v" />
        <Band tools="analyze columns | puzzle orange sigma brackets v" />
      </ToolRow>
      <ToolRow>
        <Band tools="plus v line v arc v rect v fillet v spline v cylinder v" />
        <Band tools="trim trimMany v" />
        <Band tools="translate rotate mirror scale project | offset offsetContour projectDown array stretch warp" />
        <Band tools="fence ruled revolve sweep drafted v | net netFill wireCube | trimSurf v fillSurf v blend v" />
        <Band tools="bulb v level" />
      </ToolRow>
      <CoordinateRow />
      <Ribbon />
      <div className="flex min-h-0 flex-1">
        <OperationsPanel />
        <div className="w-[5px] shrink-0 border-r-2 border-white" />
        <Viewport />
        <SideBar />
      </div>
      <StatusBar />
    </div>
  );
}
